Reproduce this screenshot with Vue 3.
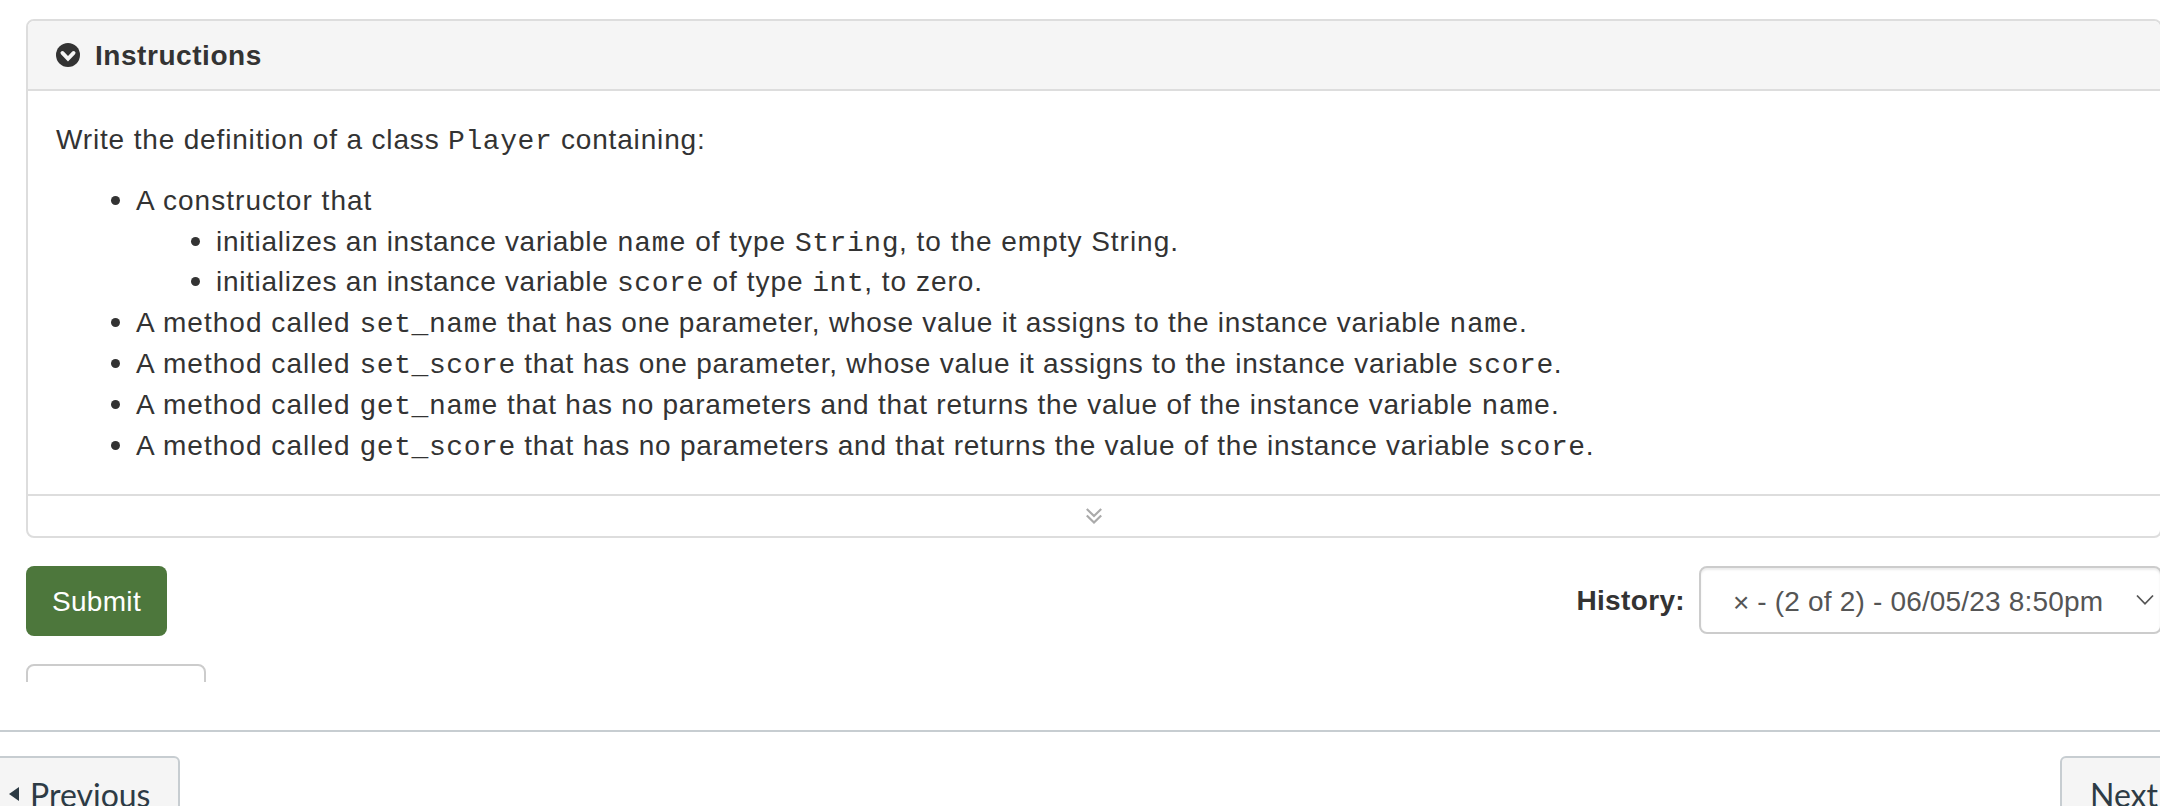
<script setup>

import {ref} from "vue";

const history = ref('- (2 of 2) - 06/05/23 8:50pm');

const methods = [
  {name: 'set_name', text: 'that has one parameter, whose value it assigns to the instance variable', field: 'name'},
  {name: 'set_score', text: 'that has one parameter, whose value it assigns to the instance variable', field: 'score'},
  {name: 'get_name', text: 'that has no parameters and that returns the value of the instance variable', field: 'name'},
  {name: 'get_score', text: 'that has no parameters and that returns the value of the instance variable', field: 'score'},
];

</script>
<template>
  <div class="page">
    <main class="exercise">
      <section class="panel">
        <header class="panel-header">
          <svg class="panel-icon" viewBox="0 0 24 24">
            <circle cx="12" cy="12" r="12" fill="#333"/>
            <path d="M6.4 9.9L12 15.8L17.6 9.9" fill="none" stroke="#f5f5f5" stroke-width="3.8" stroke-linecap="round"/>
          </svg>
          <span class="panel-title">Instructions</span>
        </header>
        <div class="panel-body">
          <p>Write the definition of a class <code>Player</code> containing:</p>
          <ul>
            <li>
              <span class="lead">A constructor that</span>
              <ul class="fields">
                <li><span class="lead">initializes an instance variable </span><code>name</code> of type <code>String</code>, to the empty String.</li>
                <li><span class="lead">initializes an instance variable </span><code>score</code> of type <code>int</code>, to zero.</li>
              </ul>
            </li>
            <li v-for="method in methods" :key="method.name">
              <span class="lead">A method called </span><code>{{ method.name }}</code> {{ method.text }} <code>{{ method.field }}</code>.
            </li>
          </ul>
        </div>
        <div class="panel-footer">
          <svg class="panel-more" viewBox="0 0 16 16">
            <path d="M.8 1L8 8L15.2 1M.8 7.5L8 14.5L15.2 7.5" fill="none" stroke="#aaa" stroke-width="2.2"/>
          </svg>
        </div>
      </section>
      <div class="actions">
        <button class="submit">Submit</button>
        <div class="history">
          <span class="history-label">History:</span>
          <div class="history-select">
            <span class="history-mark">×</span>
            <span class="history-text">{{ history }}</span>
            <svg class="history-arrow" viewBox="0 0 18 12">
              <path d="M1 1.5L9 9.8L17 1.5" fill="none" stroke="#555" stroke-width="1.8"/>
            </svg>
          </div>
        </div>
      </div>
      <div class="output"></div>
    </main>
    <nav class="pager">
      <button class="pager-button pager-button--previous">
        <svg class="pager-arrow" viewBox="0 0 10 14"><path d="M0 7L10 0V14Z" fill="#2d3b45"/></svg>
        <span>Previous</span>
      </button>
      <button class="pager-button pager-button--next">Next</button>
    </nav>
  </div>
</template>
<style>
body {
  margin: 0;
  background: #fff;
}
</style>
<style scoped>
.page {
  width: 2160px;
  height: 806px;
  overflow: hidden;
  box-sizing: border-box;
  padding-top: 19px;
  color: #333;
  font-family: "Liberation Sans", Arial, sans-serif;
  font-size: 28px;
}

.exercise {
  width: 2136px;
  height: 663px;
  margin-left: 26px;
  overflow: hidden;
}

.panel {
  box-sizing: border-box;
  height: 519px;
  border: 2px solid #ddd;
  border-radius: 8px;
  overflow: hidden;
  display: flex;
  flex-direction: column;
}

.panel-header {
  height: 68px;
  display: flex;
  align-items: center;
  padding-left: 28px;
  background: #f5f5f5;
  border-bottom: 2px solid #ddd;
}

.panel-icon {
  width: 24px;
  height: 24px;
  margin-right: 15px;
}

.panel-title {
  padding-top: 2px;
  font-weight: bold;
  letter-spacing: .55px;
}

.panel-body {
  flex: 1;
  padding: 29px 28px 0;
  letter-spacing: .77px;
  line-height: 40.8px;
}

.panel-body p {
  margin: 0 0 20px;
  letter-spacing: .84px;
}

.panel-body ul {
  margin: 0;
  padding-left: 80px;
  list-style: none;
}

.panel-body li {
  white-space: nowrap;
}

.panel-body li::before {
  content: "";
  display: inline-block;
  width: 9px;
  height: 9px;
  margin-left: -25px;
  margin-right: 16px;
  vertical-align: 5px;
  border-radius: 50%;
  background: #333;
}

.panel-body code {
  font-family: "Liberation Mono", "Courier New", monospace;
  line-height: 1;
  letter-spacing: .56px;
}

.lead {
  letter-spacing: 1.03px;
}

.fields li {
  letter-spacing: .98px;
}

.fields .lead {
  letter-spacing: .69px;
}

.panel-footer {
  height: 40px;
  display: flex;
  justify-content: center;
  align-items: center;
  border-top: 2px solid #ddd;
}

.panel-more {
  width: 16px;
  height: 16px;
}

.actions {
  height: 70px;
  margin-top: 28px;
  display: flex;
  justify-content: space-between;
}

.submit {
  width: 141px;
  height: 70px;
  padding: 2px 0 0;
  border: 0;
  border-radius: 8px;
  background: #4d773c;
  color: #fff;
  font: inherit;
  letter-spacing: .3px;
}

.history {
  height: 68px;
  display: flex;
  align-items: center;
}

.history-label {
  margin-right: 14px;
  padding-top: 2px;
  font-weight: bold;
  letter-spacing: .35px;
}

.history-select {
  box-sizing: border-box;
  width: 463px;
  height: 68px;
  display: flex;
  align-items: center;
  padding: 0 6px 0 32px;
  border: 2px solid #ccc;
  border-radius: 8px;
  box-shadow: inset 0 2px 2px rgba(0, 0, 0, .075);
  color: #555;
}

.history-mark {
  padding-top: 6px;
}

.history-text {
  margin-left: 8px;
  padding-top: 3px;
  letter-spacing: .18px;
}

.history-arrow {
  width: 18px;
  height: 12px;
  margin-left: auto;
}

.output {
  box-sizing: border-box;
  width: 180px;
  height: 60px;
  margin-top: 28px;
  border: 2px solid #ccc;
  border-radius: 8px;
}

.pager {
  height: 110px;
  margin-top: 48px;
  padding-top: 24px;
  display: flex;
  justify-content: space-between;
  border-top: 2px solid #c7cdd1;
}

.pager-button {
  box-sizing: border-box;
  height: 76px;
  display: flex;
  align-items: center;
  border: 2px solid #c7cdd1;
  border-radius: 6px;
  background: #f5f5f5;
  color: #2d3b45;
  font-family: Lato, sans-serif;
  font-size: 32px;
}

.pager-button--previous {
  width: 190px;
  margin-left: -10px;
  padding: 0 0 0 17px;
}

.pager-button--next {
  width: 130px;
  margin-right: -30px;
  padding: 0 0 0 28px;
}

.pager-arrow {
  width: 10px;
  height: 14px;
  margin-right: 11px;
}
</style>
